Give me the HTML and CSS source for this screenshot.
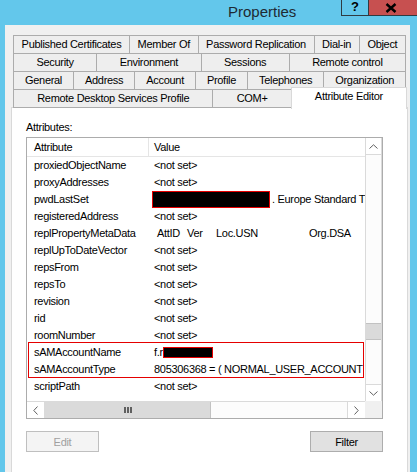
FILE: index.html
```html
<!DOCTYPE html>
<html lang="en">
<head>
  <meta charset="UTF-8" />
  <title>Properties</title>
  <link rel="stylesheet" href="styles.css">
</head>

<body>
  <div class="window">
    <div class="titlebar">
      <span class="title">Properties</span>
      <div class="caption-buttons">
        <span class="btn-help">?</span>
        <span class="btn-close">
          <svg width="12" height="10" viewBox="0 0 12 10"><path d="M1.5 1 L10.5 9 M10.5 1 L1.5 9" stroke="#000" stroke-width="2.4" /></svg>
        </span>
      </div>
    </div>

    <div class="client">
      <div class="tabs">
        <div class="tab-row">
          <span class="tab">Published Certificates</span>
          <span class="tab">Member Of</span>
          <span class="tab">Password Replication</span>
          <span class="tab">Dial-in</span>
          <span class="tab">Object</span>
        </div>
        <div class="tab-row">
          <span class="tab">Security</span>
          <span class="tab">Environment</span>
          <span class="tab">Sessions</span>
          <span class="tab">Remote control</span>
        </div>
        <div class="tab-row">
          <span class="tab">General</span>
          <span class="tab">Address</span>
          <span class="tab">Account</span>
          <span class="tab">Profile</span>
          <span class="tab">Telephones</span>
          <span class="tab">Organization</span>
        </div>
        <div class="tab-row">
          <span class="tab">Remote Desktop Services Profile</span>
          <span class="tab">COM+</span>
          <span class="tab active">Attribute Editor</span>
        </div>
      </div>

      <div class="panel">
        <div class="label">Attributes:</div>

        <div class="listbox">
          <div class="list-view">
            <div class="list-header">
              <span class="col-attr">Attribute</span>
              <span class="col-val">Value</span>
            </div>
            <div class="list-body">
              <div class="row"><span class="cell-attr">proxiedObjectName</span><span class="cell-val">&lt;not set&gt;</span></div>
              <div class="row"><span class="cell-attr">proxyAddresses</span><span class="cell-val">&lt;not set&gt;</span></div>
              <div class="row"><span class="cell-attr">pwdLastSet</span><span class="cell-val"><span class="redact-big"></span>. Europe Standard Time</span></div>
              <div class="row"><span class="cell-attr">registeredAddress</span><span class="cell-val">&lt;not set&gt;</span></div>
              <div class="row"><span class="cell-attr">replPropertyMetaData</span><span class="cell-val meta"><span class="meta-id">AttID</span><span class="meta-ver">Ver</span><span class="meta-usn">Loc.USN</span><span>Org.DSA</span></span></div>
              <div class="row"><span class="cell-attr">replUpToDateVector</span><span class="cell-val">&lt;not set&gt;</span></div>
              <div class="row"><span class="cell-attr">repsFrom</span><span class="cell-val">&lt;not set&gt;</span></div>
              <div class="row"><span class="cell-attr">repsTo</span><span class="cell-val">&lt;not set&gt;</span></div>
              <div class="row"><span class="cell-attr">revision</span><span class="cell-val">&lt;not set&gt;</span></div>
              <div class="row"><span class="cell-attr">rid</span><span class="cell-val">&lt;not set&gt;</span></div>
              <div class="row"><span class="cell-attr">roomNumber</span><span class="cell-val">&lt;not set&gt;</span></div>
              <div class="row"><span class="cell-attr">sAMAccountName</span><span class="cell-val">f.r<span class="redact-small"></span></span></div>
              <div class="row"><span class="cell-attr">sAMAccountType</span><span class="cell-val">805306368 = ( NORMAL_USER_ACCOUNT )</span></div>
              <div class="row"><span class="cell-attr">scriptPath</span><span class="cell-val">&lt;not set&gt;</span></div>
              <span class="mark"></span>
            </div>
          </div>

          <div class="vscroll">
            <span class="arrow-btn">
              <svg width="9" height="5" viewBox="0 0 9 5"><path d="M0.5 4.5 L4.5 0.8 L8.5 4.5" fill="none" stroke="#606060" /></svg>
            </span>
            <span class="vthumb"></span>
            <span class="arrow-btn down">
              <svg width="9" height="5" viewBox="0 0 9 5"><path d="M0.5 0.5 L4.5 4.2 L8.5 0.5" fill="none" stroke="#606060" /></svg>
            </span>
          </div>

          <div class="hscroll">
            <span class="arrow-btn left">
              <svg width="5" height="9" viewBox="0 0 5 9"><path d="M4.5 0.5 L0.8 4.5 L4.5 8.5" fill="none" stroke="#606060" /></svg>
            </span>
            <span class="hthumb">
              <svg width="8" height="6" viewBox="0 0 8 6"><rect x="0" y="0" width="2" height="6" fill="#606060" /><rect x="3" y="0" width="2" height="6" fill="#606060" /><rect x="6" y="0" width="2" height="6" fill="#606060" /></svg>
            </span>
            <span class="arrow-btn right">
              <svg width="5" height="9" viewBox="0 0 5 9"><path d="M0.5 0.5 L4.2 4.5 L0.5 8.5" fill="none" stroke="#606060" /></svg>
            </span>
          </div>

          <div class="corner"></div>
        </div>

        <div class="buttons">
          <button class="edit" disabled>Edit</button>
          <button class="filter">Filter</button>
        </div>
      </div>
    </div>
  </div>
</body>
</html>
```

FILE: styles.css
```css
* {
  box-sizing: border-box;
}

body {
  margin: 0;
  width: 417px;
  height: 472px;
  overflow: hidden;
  background: #63c7eb;
  font-family: "Liberation Sans", Arial, sans-serif;
  font-size: 11px;
  letter-spacing: -0.3px;
  color: #000;
}

/* title bar */
.titlebar {
  height: 25px;
  display: flex;
}

.title {
  padding-left: 228px;
  font-size: 15px;
  line-height: 23px;
  letter-spacing: 0;
  color: #1e2a33;
}

.caption-buttons {
  margin-left: auto;
  display: flex;
  height: 16px;
}

.btn-help {
  width: 28px;
  height: 16px;
  border: 1px solid #2f3b42;
  border-top: none;
  font-weight: bold;
  font-size: 13px;
  line-height: 14px;
  text-align: center;
  letter-spacing: 0;
}

.btn-close {
  width: 48px;
  height: 16px;
  background: #c75050;
  border-bottom: 1px solid #2f3b42;
  display: flex;
  justify-content: center;
  align-items: center;
  padding-right: 4px;
}

/* client area */
.client {
  margin-left: 5px;
  width: 405px;
  height: 447px;
  background: #f0f0f0;
  padding: 10px 0 0 6px;
  overflow: hidden;
}

.tabs {
  margin-left: 2px;
  width: 393px;
}

.tab-row {
  display: flex;
  height: 19px;
  margin-bottom: -1px;
}

.tab {
  flex: 1 1 auto;
  border: 1px solid #acacac;
  margin-right: -1px;
  background: #eeeeee;
  text-align: center;
  line-height: 17px;
  white-space: nowrap;
  padding: 0 7px;
}

.tab:last-child {
  margin-right: 0;
}

.tab.active {
  position: relative;
  z-index: 1;
  margin-top: -2px;
  margin-right: -1px;
  height: 22px;
  background: #fff;
  border-color: #d9d9d9;
  border-bottom: none;
}

/* page */
.panel {
  width: 397px;
  height: 400px;
  background: #fff;
  border: 1px solid #d9d9d9;
  padding: 12px 0 0 14px;
}

.label {
  line-height: 14px;
  margin-bottom: 3px;
}

.listbox {
  width: 357px;
  height: 282px;
  border: 1px solid #acacac;
  display: grid;
  grid-template-columns: 1fr 17px;
  grid-template-rows: 1fr 17px;
}

.list-view {
  overflow: hidden;
  white-space: nowrap;
}

.list-header {
  display: flex;
  height: 19px;
  line-height: 18px;
  border-bottom: 1px solid #e5e5e5;
}

.col-attr {
  width: 122px;
  padding-left: 7px;
  border-right: 1px solid #e5e5e5;
}

.col-val {
  padding-left: 5px;
}

.list-body {
  position: relative;
}

.row {
  display: flex;
  height: 17px;
  line-height: 17px;
}

.cell-attr {
  width: 122px;
  flex: none;
  padding-left: 7px;
}

.cell-val {
  padding-left: 5px;
}

.redact-big {
  display: inline-block;
  vertical-align: top;
  width: 118px;
  height: 17px;
  margin: 0 2px 0 -2px;
  background: #000;
  border: 1px solid #e50000;
}

.redact-small {
  display: inline-block;
  vertical-align: top;
  width: 50px;
  height: 11px;
  margin-top: 3px;
  background: #000;
  border: 1px solid #e50000;
}

.meta {
  padding-left: 8px;
}

.meta-id {
  display: inline-block;
  width: 30px;
}

.meta-ver {
  display: inline-block;
  width: 29px;
}

.meta-usn {
  display: inline-block;
  width: 93px;
}

/* red box round the two sAMAccount rows */
.mark {
  position: absolute;
  left: 1px;
  top: 185px;
  width: 336px;
  height: 36px;
  border: 1px solid #e50000;
}

/* scroll bars */
.vscroll {
  display: flex;
  flex-direction: column;
  background: #fcfcfc;
  border-left: 1px solid #dadada;
  border-right: 1px solid #dadada;
}

.arrow-btn {
  width: 16px;
  height: 17px;
  display: flex;
  justify-content: center;
  align-items: center;
  background: #fff;
  border-bottom: 1px solid #dadada;
  flex: none;
}

.vscroll .arrow-btn {
  width: 15px;
}

.arrow-btn.down {
  margin-top: auto;
  border-bottom: none;
  border-top: 1px solid #dadada;
}

.vthumb {
  margin-top: 168px;
  height: 17px;
  background: #dadada;
  border-top: 1px solid #c2c2c2;
  border-bottom: 1px solid #c2c2c2;
}

.hscroll {
  display: flex;
  background: #fcfcfc;
  border-top: 1px solid #dadada;
}

.hscroll .arrow-btn {
  height: 16px;
  width: 18px;
  border-bottom: none;
}

.arrow-btn.left {
  border-right: 1px solid #dadada;
}

.arrow-btn.right {
  margin-left: auto;
  border-left: 1px solid #dadada;
}

.hthumb {
  width: 166px;
  background: #dadada;
  border-right: 1px solid #c2c2c2;
  display: flex;
  justify-content: center;
  align-items: center;
}

.corner {
  background: #f0f0f0;
}

/* buttons */
.buttons {
  width: 357px;
  margin-top: 12px;
  display: flex;
  justify-content: space-between;
}

.buttons button {
  width: 73px;
  height: 21px;
  padding: 0;
  font-family: "Liberation Sans", Arial, sans-serif;
  font-size: 11px;
  letter-spacing: -0.3px;
}

.edit {
  background: #f4f4f4;
  border: 1px solid #bfbfbf;
  color: #a0a0a0;
}

.filter {
  background: #e1e1e1;
  border: 1px solid #adadad;
  color: #000;
}
```
